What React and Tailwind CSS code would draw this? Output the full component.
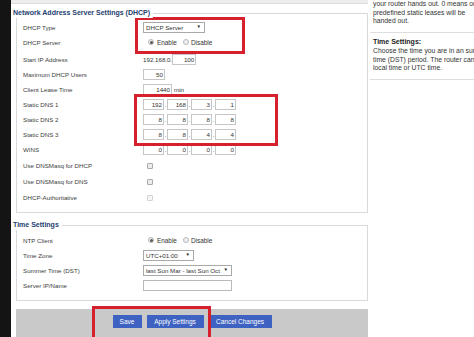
import React from "react";

function Label({ children }) {
  return <div className="w-[126px] shrink-0 pl-[6px] text-[6.2px] text-[#3d3d3d] whitespace-nowrap">{children}</div>;
}

function Row({ label, children, extra = "" }) {
  return (
    <div className={"flex items-center h-[15px] " + extra}>
      <Label>{label}</Label>
      <div className="flex items-center text-[6.2px] text-[#333]">{children}</div>
    </div>
  );
}

function Box({ v, w = "w-[21px]" }) {
  return (
    <div className={"h-[11px] border border-[#c6c6c6] bg-white flex items-center justify-end pr-[1px] text-[6.2px] text-[#333] " + w}>
      {v}
    </div>
  );
}

function Quad({ vals }) {
  return (
    <div className="flex items-center">
      {vals.map((v, i) => (
        <React.Fragment key={i}>
          <Box v={v} />
          {i < 3 && <span className="w-[3px] text-center text-[6.2px]">.</span>}
        </React.Fragment>
      ))}
    </div>
  );
}

function Radio({ checked }) {
  return (
    <span className="w-[6px] h-[6px] rounded-full border border-[#b8b8b8] bg-[#f0f0f0] flex items-center justify-center">
      {checked && <span className="w-[3px] h-[3px] rounded-full bg-[#5a5a5a]" />}
    </span>
  );
}

function Radios() {
  return (
    <div className="flex items-center pl-[5px]">
      <Radio checked />
      <span className="ml-[3px] text-[6.4px] text-[#333]">Enable</span>
      <span className="ml-[6px]"><Radio /></span>
      <span className="ml-[2px] text-[6.4px] text-[#333]">Disable</span>
    </div>
  );
}

function Select({ text, w }) {
  return (
    <div className={"h-[11px] border border-[#a9a9a9] bg-white flex items-center justify-between pl-[2px] pr-[3px] text-[6.2px] text-[#333] " + w}>
      <span className="whitespace-nowrap">{text}</span>
      <span className="text-[4.5px] text-[#222]">▼</span>
    </div>
  );
}

function Check({ disabled }) {
  return (
    <div className="pl-[4px]">
      <div
        className={
          "w-[6px] h-[6px] rounded-[1px] border " +
          (disabled ? "border-[#d4d4d4] bg-[#f6f6f6]" : "border-[#a8a8a8] bg-[#ececec]")
        }
      />
    </div>
  );
}

function Legend({ children }) {
  return (
    <div className="relative z-10 flex items-center h-[10px] -mb-[5px]">
      <span className="bg-white pr-[3px] text-[7px] font-bold text-[#24406f] whitespace-nowrap">{children}</span>
    </div>
  );
}

export default function App() {
  return (
    <div className="w-[474px] h-[337px] overflow-hidden flex bg-white font-['Liberation_Sans',Arial,sans-serif]">
      <div className="w-[11px] shrink-0 bg-[#141414]" />

      <div className="relative w-[357px] shrink-0 flex flex-col">
        <div className="h-[4px] bg-[#ececec] border-b border-[#dcdcdc]" />

        <div className="mt-[4px] pl-[2px]">
          <Legend>Network Address Server Settings (DHCP)</Legend>
          <div className="ml-[3px] border border-[#d9d9d9] pt-[6px] pb-[7px]">
            <Row label="DHCP Type">
              <Select text="DHCP Server" w="w-[62px]" />
            </Row>
            <Row label="DHCP Server">
              <Radios />
            </Row>
            <Row label="Start IP Address" extra="mt-[2px]">
              <span>192.168.0.</span>
              <Box v="100" w="w-[24px]" />
            </Row>
            <Row label="Maximum DHCP Users">
              <Box v="50" w="w-[22px]" />
            </Row>
            <Row label="Client Lease Time">
              <Box v="1440" w="w-[29px]" />
              <span className="ml-[2px]">min</span>
            </Row>
            <Row label="Static DNS 1">
              <Quad vals={["192", "168", "3", "1"]} />
            </Row>
            <Row label="Static DNS 2">
              <Quad vals={["8", "8", "8", "8"]} />
            </Row>
            <Row label="Static DNS 3">
              <Quad vals={["8", "8", "4", "4"]} />
            </Row>
            <Row label="WINS">
              <Quad vals={["0", "0", "0", "0"]} />
            </Row>
            <Row label="Use DNSMasq for DHCP" extra="mt-[1px]">
              <Check />
            </Row>
            <Row label="Use DNSMasq for DNS" extra="mt-[1px]">
              <Check />
            </Row>
            <Row label="DHCP-Authoritative" extra="mt-[1px]">
              <Check disabled />
            </Row>
          </div>
        </div>

        <div className="mt-[7px] pl-[2px]">
          <Legend>Time Settings</Legend>
          <div className="ml-[3px] border border-[#d9d9d9] pt-[7px] pb-[7px]">
            <Row label="NTP Client">
              <Radios />
            </Row>
            <Row label="Time Zone">
              <Select text="UTC+01:00" w="w-[51px]" />
            </Row>
            <Row label="Summer Time (DST)">
              <Select text="last Sun Mar - last Sun Oct" w="w-[89px]" />
            </Row>
            <Row label="Server IP/Name">
              <div className="h-[11px] w-[89px] border border-[#b9b9b9] bg-white" />
            </Row>
          </div>
        </div>

        <div className="mt-[8px] ml-[5px] flex-1 bg-[#c9c9c9] flex justify-center gap-[5px] pt-[6px]">
          <div className="h-[13px] w-[29px] bg-[#3e62c1] text-white text-[6.5px] flex items-center justify-center">Save</div>
          <div className="h-[13px] w-[57px] bg-[#3e62c1] text-white text-[6.5px] flex items-center justify-center">Apply Settings</div>
          <div className="h-[13px] w-[63px] bg-[#3e62c1] text-white text-[6.5px] flex items-center justify-center">Cancel Changes</div>
        </div>

        <div className="absolute left-[124px] top-[17px] w-[110px] h-[37px] border-[3px] border-[#d6202c]" />
        <div className="absolute left-[123px] top-[94px] w-[144px] h-[52px] border-[3px] border-[#d6202c]" />
        <div className="absolute left-[81px] top-[306px] w-[119px] h-[36px] border-[3px] border-[#d6202c]" />
      </div>

      <div className="flex-1 overflow-hidden pl-[5px] text-[6.8px] leading-[8.5px] text-[#333]">
        <div className="whitespace-nowrap">your router hands out. 0 means only</div>
        <div className="whitespace-nowrap">predefined static leases will be</div>
        <div className="whitespace-nowrap">handed out.</div>
        <div className="mt-[6px] -ml-[3px] border-t border-[#dedede]" />
        <div className="mt-[5px] font-bold text-[7px] text-[#222] whitespace-nowrap">Time Settings:</div>
        <div className="mt-[1px] whitespace-nowrap">Choose the time you are in an summer</div>
        <div className="whitespace-nowrap">time (DST) period. The router can use</div>
        <div className="whitespace-nowrap">local time or UTC time.</div>
        <div className="mt-[6px] -ml-[3px] border-t border-[#dedede]" />
      </div>
    </div>
  );
}
